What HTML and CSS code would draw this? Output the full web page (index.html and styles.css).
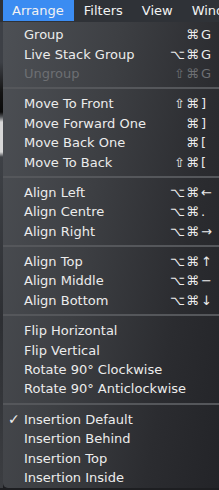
FILE: index.html
```html
<!DOCTYPE html>
<html lang="en">

<head>
    <meta charset="UTF-8">
    <title>Arrange menu</title>
    <link rel="stylesheet" href="styles.css">
</head>

<body>
    <div class="menubar">
        <span class="title active">Arrange</span>
        <span class="title">Filters</span>
        <span class="title">View</span>
        <span class="title">Window</span>
    </div>
    <div class="below">
        <div class="desk"></div>
        <ul class="menu">
            <li class="item"><span class="label">Group</span><span class="mods">⌘</span><span class="key">G</span></li>
            <li class="item"><span class="label">Live Stack Group</span><span class="mods">⌥⌘</span><span class="key">G</span></li>
            <li class="item off"><span class="label">Ungroup</span><span class="mods">⇧⌘</span><span class="key">G</span></li>
            <li class="sep"></li>
            <li class="item"><span class="label">Move To Front</span><span class="mods">⇧⌘</span><span class="key">]</span></li>
            <li class="item"><span class="label">Move Forward One</span><span class="mods">⌘</span><span class="key">]</span></li>
            <li class="item"><span class="label">Move Back One</span><span class="mods">⌘</span><span class="key">[</span></li>
            <li class="item"><span class="label">Move To Back</span><span class="mods">⇧⌘</span><span class="key">[</span></li>
            <li class="sep"></li>
            <li class="item"><span class="label">Align Left</span><span class="mods">⌥⌘</span><span class="key">←</span></li>
            <li class="item"><span class="label">Align Centre</span><span class="mods">⌥⌘</span><span class="key">.</span></li>
            <li class="item"><span class="label">Align Right</span><span class="mods">⌥⌘</span><span class="key">→</span></li>
            <li class="sep"></li>
            <li class="item"><span class="label">Align Top</span><span class="mods">⌥⌘</span><span class="key">↑</span></li>
            <li class="item"><span class="label">Align Middle</span><span class="mods">⌥⌘</span><span class="key">−</span></li>
            <li class="item"><span class="label">Align Bottom</span><span class="mods">⌥⌘</span><span class="key">↓</span></li>
            <li class="sep"></li>
            <li class="item"><span class="label">Flip Horizontal</span></li>
            <li class="item"><span class="label">Flip Vertical</span></li>
            <li class="item"><span class="label">Rotate 90° Clockwise</span></li>
            <li class="item"><span class="label">Rotate 90° Anticlockwise</span></li>
            <li class="sep"></li>
            <li class="item"><span class="check">✓</span><span class="label">Insertion Default</span></li>
            <li class="item"><span class="label">Insertion Behind</span></li>
            <li class="item"><span class="label">Insertion Top</span></li>
            <li class="item"><span class="label">Insertion Inside</span></li>
        </ul>
    </div>
</body>

</html>
```

FILE: styles.css
```css
* {
    padding: 0px;
    margin: 0px;
    list-style: none;
    box-sizing: border-box;
}

body {
    width: 219px;
    height: 490px;
    overflow: hidden;
    background-color: #1d1e21;
    font-family: "DejaVu Sans", sans-serif;
    font-size: 13px;
    color: #ececec;
}

.menubar {
    display: flex;
    height: 22px;
    padding-left: 3px;
    background-color: #2f3237;
    white-space: nowrap;
    overflow: hidden;
}

.menubar .title {
    display: block;
    height: 21px;
    line-height: 21px;
    padding: 0px 9px;
    color: #f2f2f2;
    margin-right: 1px;
}

.menubar .active {
    background-color: #3b8cf2;
    padding: 0px 10px 0px 9px;
}

.below {
    display: flex;
    height: 466px;
}

.desk {
    width: 3px;
    flex-shrink: 0;
    background: linear-gradient(to bottom, #3d4046 0px, #3d4046 40px, #141414 70px, #0a0a0a 90px,
        #55585c 95px, #d8d8d8 100px, #d8d8d8 130px, #3e4146 135px, #2d2f33 300px, #3c3e42 466px);
}

.menu {
    flex: 1;
    height: 466px;
    padding-top: 3px;
    border-radius: 0px 0px 0px 5px;
    background: linear-gradient(100deg, #4d5055 0%, #3d3f43 40%, #2b2c30 75%, #232428 100%);
}

.menu .item {
    display: flex;
    align-items: center;
    position: relative;
    height: 19.4px;
    padding-left: 21px;
    white-space: nowrap;
}

.menu .label {
    flex: 1;
}

.menu .mods {
    text-align: right;
    letter-spacing: 1px;
}

.menu .key {
    width: 19px;
    padding-left: 1px;
}

.menu .off {
    color: #6d6f73;
}

.menu .check {
    position: absolute;
    left: 5px;
    top: 1px;
    font-size: 14px;
}

.menu .sep {
    height: 11px;
    padding: 4px 0px 0px;
}

.menu .sep::before {
    content: "";
    display: block;
    height: 2px;
    background-color: #55575b;
}
```
